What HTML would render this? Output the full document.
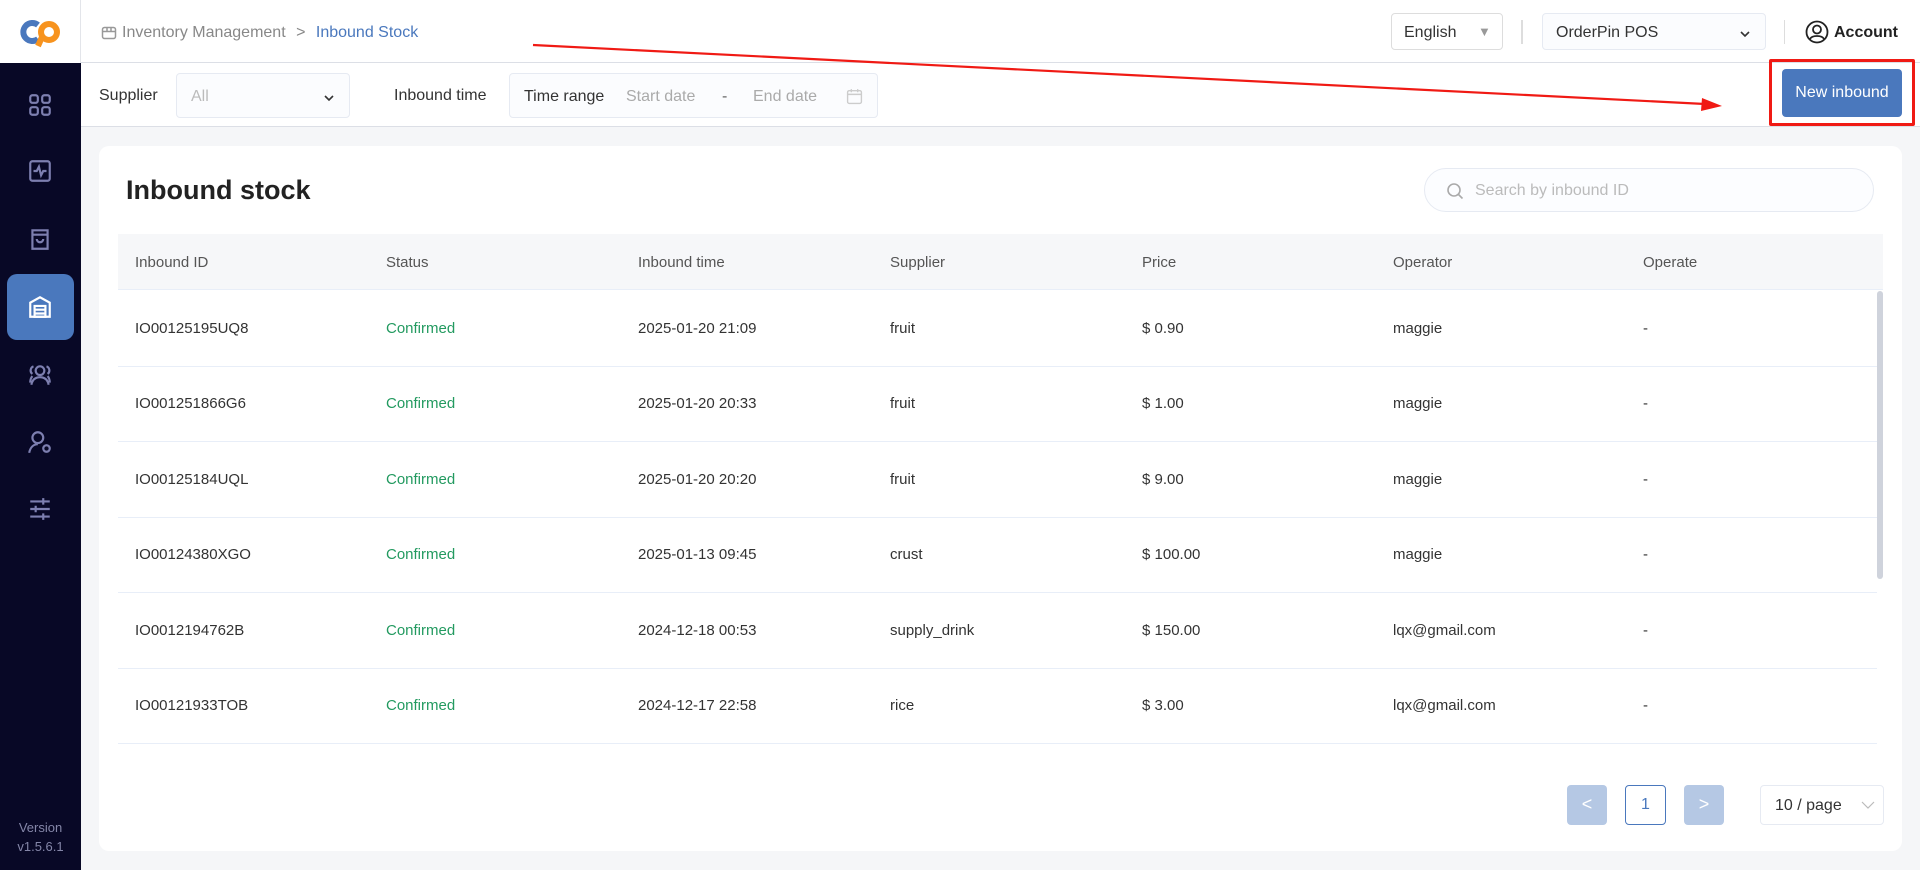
<!DOCTYPE html>
<html><head><meta charset="utf-8"><style>
*{box-sizing:border-box;margin:0;padding:0}
body{width:1920px;height:870px;overflow:hidden;background:#f5f6f8;font-family:"Liberation Sans",sans-serif;color:#333;position:relative}
.abs{position:absolute}
.sb{left:0;top:0;width:81px;height:870px;background:#080826}
.logo{left:0;top:0;width:81px;height:63px;background:#fff;border-right:1px solid #e3e5ea}
.hdr{left:81px;top:0;width:1839px;height:63px;background:#fff;border-bottom:1px solid #dcdfe6}
.fb{left:81px;top:63px;width:1839px;height:64px;background:#fff;border-bottom:1px solid #dcdfe6}
.box{border:1px solid #e6eaf2;border-radius:4px;background:#fbfcfe}
.card{left:99px;top:146px;width:1803px;height:705px;background:#fff;border-radius:10px}
.row{position:absolute;left:118px;width:1759px;height:76px;border-bottom:1px solid #e8eef8;font-size:15px;color:#333}
.row span{position:absolute;top:0;line-height:75px}
.ic{left:27px;stroke:#7d7fb0;fill:none;stroke-width:2}
</style></head><body>
<div class="abs sb"></div>
<div class="abs logo">
<svg class="abs" style="left:15px;top:15px" width="52" height="36" viewBox="0 0 52 36"><path d="M23 10 A9 9 0 1 0 23 24" stroke="#4a78bd" stroke-width="6" fill="none"/><circle cx="34" cy="17" r="8" stroke="#f7931e" stroke-width="6" fill="none"/><path d="M27 22 L23 31" stroke="#f7931e" stroke-width="6"/></svg>
</div>
<svg class="abs ic" style="top:92px" width="26" height="26" viewBox="0 0 24 24"><rect x="3" y="3" width="7" height="7" rx="2"/><rect x="14" y="3" width="7" height="7" rx="2"/><rect x="3" y="14" width="7" height="7" rx="2"/><rect x="14" y="14" width="7" height="7" rx="2"/></svg>
<svg class="abs ic" style="top:158px" width="26" height="26" viewBox="0 0 24 24"><rect x="3" y="3" width="18" height="18" rx="2"/><path d="M6 12h3l2-4 2 8 2-4h3"/></svg>
<svg class="abs ic" style="top:226px" width="26" height="26" viewBox="0 0 24 24"><path d="M5 4h14v17H5z M5 8h14"/><path d="M9 12a3 3 0 0 0 6 0"/></svg>
<div class="abs" style="left:7px;top:274px;width:67px;height:66px;background:#4a78bd;border-radius:10px"></div>
<svg class="abs" style="left:27px;top:294px" width="26" height="26" viewBox="0 0 24 24" fill="none" stroke="#fff" stroke-width="2"><path d="M3 21V8l9-5 9 5v13z"/><path d="M7 11h10v10H7zM7 14.5h10M7 18h10"/></svg>
<svg class="abs ic" style="top:362px" width="26" height="26" viewBox="0 0 24 24"><circle cx="12" cy="8" r="4"/><path d="M4 21c1-5 4-7 8-7s7 2 8 7M6 4a4 4 0 0 0-1 7M18 4a4 4 0 0 1 1 7M3 19c0-3 1-5 2-6M21 19c0-3-1-5-2-6"/></svg>
<svg class="abs ic" style="top:429px" width="26" height="26" viewBox="0 0 24 24"><circle cx="10" cy="8" r="5"/><path d="M2 22c1-5 4-8 8-8"/><circle cx="18" cy="18" r="3"/></svg>
<svg class="abs ic" style="top:496px" width="26" height="26" viewBox="0 0 24 24"><path d="M3 5h18M3 12h18M3 19h18M15 2v6M8 9v6M15 16v6"/></svg>
<div class="abs" style="left:0;top:818px;width:81px;text-align:center;color:#8486a8;font-size:13px;line-height:19px">Version<br>v1.5.6.1</div>

<div class="abs hdr">
<svg class="abs" style="left:20px;top:25px" width="16" height="16" viewBox="0 0 16 16" fill="none" stroke="#999" stroke-width="1.5"><rect x="1.5" y="2.5" width="13" height="11" rx="2"/><path d="M1.5 6.5h13M6 2.5v4M10 2.5v4"/></svg>
<div class="abs" style="left:41px;top:24px;font-size:16px;color:#888">Inventory Management <span style="margin:0 6px">&gt;</span> <span style="color:#4a78bd">Inbound Stock</span></div>
<div class="abs box" style="left:1310px;top:13px;width:112px;height:37px;background:#fff;border-color:#ddd"><span class="abs" style="left:12px;top:10px;font-size:16px">English</span><span class="abs" style="left:86px;top:10px;color:#999;font-size:13px">▼</span></div>
<div class="abs" style="left:1440px;top:20px;width:2px;height:24px;background:#ddd"></div>
<div class="abs box" style="left:1461px;top:13px;width:224px;height:37px"><span class="abs" style="left:13px;top:10px;font-size:16px">OrderPin POS</span><svg class="abs" style="left:196px;top:15px" width="12" height="10" viewBox="0 0 12 10" fill="none" stroke="#333" stroke-width="1.6"><path d="M2 3l4 4 4-4"/></svg></div>
<div class="abs" style="left:1703px;top:20px;width:1px;height:24px;background:#ddd"></div>
<svg class="abs" style="left:1724px;top:20px" width="24" height="24" viewBox="0 0 24 24" fill="none" stroke="#222" stroke-width="1.8"><circle cx="12" cy="12" r="10.5"/><circle cx="12" cy="9.5" r="4"/><path d="M5 19c2-4 12-4 14 0"/></svg>
<div class="abs" style="left:1753px;top:24px;font-size:16px;font-weight:bold;color:#222">Account</div>
</div>

<div class="abs fb">
<div class="abs" style="left:18px;top:24px;font-size:16px">Supplier</div>
<div class="abs box" style="left:95px;top:10px;width:174px;height:45px"><span class="abs" style="left:14px;top:14px;color:#bbb;font-size:16px">All</span><svg class="abs" style="left:146px;top:19px" width="12" height="10" viewBox="0 0 12 10" fill="none" stroke="#333" stroke-width="1.6"><path d="M2 3l4 4 4-4"/></svg></div>
<div class="abs" style="left:313px;top:24px;font-size:16px">Inbound time</div>
<div class="abs box" style="left:428px;top:10px;width:369px;height:45px;font-size:16px">
<span class="abs" style="left:14px;top:14px">Time range</span><span class="abs" style="left:116px;top:14px;color:#aaa">Start date</span><span class="abs" style="left:212px;top:14px;color:#666">-</span><span class="abs" style="left:243px;top:14px;color:#aaa">End date</span>
<svg class="abs" style="left:336px;top:14px" width="17" height="17" viewBox="0 0 16 16" fill="none" stroke="#ccc" stroke-width="1.3"><rect x="1.5" y="2.5" width="13" height="12" rx="1.5"/><path d="M1.5 6h13M5 1v3M11 1v3"/></svg></div>
<div class="abs" style="left:1701px;top:6px;width:120px;height:48px;background:#4a78bd;border-radius:4px;color:#fff;font-size:16px;text-align:center;line-height:48px">New inbound</div>
<div class="abs" style="left:1688px;top:-4px;width:146px;height:67px;border:3px solid #f01a14;border-radius:2px"></div>
</div>
<svg class="abs" style="left:0;top:0" width="1920" height="130"><line x1="533" y1="45" x2="1705" y2="104" stroke="#f01a14" stroke-width="2.2"/><path d="M1722 106 L1702 98 L1701 111 Z" fill="#f01a14"/></svg>

<div class="abs card"></div>
<div class="abs" style="left:126px;top:175px;font-size:27px;font-weight:bold;color:#222">Inbound stock</div>
<div class="abs" style="left:1424px;top:168px;width:450px;height:44px;border:1px solid #e6eaf2;border-radius:22px;background:#fcfdff">
<svg class="abs" style="left:21px;top:13px" width="18" height="18" viewBox="0 0 18 18" fill="none" stroke="#aaa" stroke-width="1.6"><circle cx="8" cy="8" r="6"/><path d="M12.5 12.5l4 4"/></svg>
<span class="abs" style="left:50px;top:13px;font-size:16px;color:#bbb">Search by inbound ID</span></div>

<div class="abs" style="left:118px;top:234px;width:1765px;height:56px;background:#f6f7f9;border-bottom:1px solid #e8eef8;font-size:15px;color:#555">
<span class="abs" style="left:17px;top:20px">Inbound ID</span><span class="abs" style="left:268px;top:20px">Status</span><span class="abs" style="left:520px;top:20px">Inbound time</span><span class="abs" style="left:772px;top:20px">Supplier</span><span class="abs" style="left:1024px;top:20px">Price</span><span class="abs" style="left:1275px;top:20px">Operator</span><span class="abs" style="left:1525px;top:20px">Operate</span></div>

<div class="row" style="top:291px"><span style="left:17px">IO00125195UQ8</span><span style="left:268px;color:#239a60">Confirmed</span><span style="left:520px">2025-01-20 21:09</span><span style="left:772px">fruit</span><span style="left:1024px">$ 0.90</span><span style="left:1275px">maggie</span><span style="left:1525px">-</span></div>
<div class="row" style="top:366px"><span style="left:17px">IO001251866G6</span><span style="left:268px;color:#239a60">Confirmed</span><span style="left:520px">2025-01-20 20:33</span><span style="left:772px">fruit</span><span style="left:1024px">$ 1.00</span><span style="left:1275px">maggie</span><span style="left:1525px">-</span></div>
<div class="row" style="top:442px"><span style="left:17px">IO00125184UQL</span><span style="left:268px;color:#239a60">Confirmed</span><span style="left:520px">2025-01-20 20:20</span><span style="left:772px">fruit</span><span style="left:1024px">$ 9.00</span><span style="left:1275px">maggie</span><span style="left:1525px">-</span></div>
<div class="row" style="top:517px"><span style="left:17px">IO00124380XGO</span><span style="left:268px;color:#239a60">Confirmed</span><span style="left:520px">2025-01-13 09:45</span><span style="left:772px">crust</span><span style="left:1024px">$ 100.00</span><span style="left:1275px">maggie</span><span style="left:1525px">-</span></div>
<div class="row" style="top:593px"><span style="left:17px">IO0012194762B</span><span style="left:268px;color:#239a60">Confirmed</span><span style="left:520px">2024-12-18 00:53</span><span style="left:772px">supply_drink</span><span style="left:1024px">$ 150.00</span><span style="left:1275px">lqx@gmail.com</span><span style="left:1525px">-</span></div>
<div class="row" style="top:668px"><span style="left:17px">IO00121933TOB</span><span style="left:268px;color:#239a60">Confirmed</span><span style="left:520px">2024-12-17 22:58</span><span style="left:772px">rice</span><span style="left:1024px">$ 3.00</span><span style="left:1275px">lqx@gmail.com</span><span style="left:1525px">-</span></div>
<div class="abs" style="left:1877px;top:291px;width:6px;height:288px;background:#cfd3dc;border-radius:3px"></div>

<div class="abs" style="left:1567px;top:785px;width:40px;height:40px;background:#b5c8e4;border-radius:4px;color:#fff;text-align:center;line-height:38px;font-size:18px">&lt;</div>
<div class="abs" style="left:1625px;top:785px;width:41px;height:40px;border:1px solid #4a78bd;border-radius:4px;color:#4a78bd;text-align:center;line-height:38px;font-size:16px">1</div>
<div class="abs" style="left:1684px;top:785px;width:40px;height:40px;background:#b5c8e4;border-radius:4px;color:#fff;text-align:center;line-height:38px;font-size:18px">&gt;</div>
<div class="abs" style="left:1760px;top:785px;width:124px;height:40px;border:1px solid #e6eaf2;border-radius:4px;font-size:16px"><span class="abs" style="left:14px;top:11px">10 / page</span><svg class="abs" style="left:100px;top:14px" width="14" height="10" viewBox="0 0 14 10" fill="none" stroke="#bbb" stroke-width="1.2"><path d="M1 2l6 6 6-6"/></svg></div>
</body></html>
